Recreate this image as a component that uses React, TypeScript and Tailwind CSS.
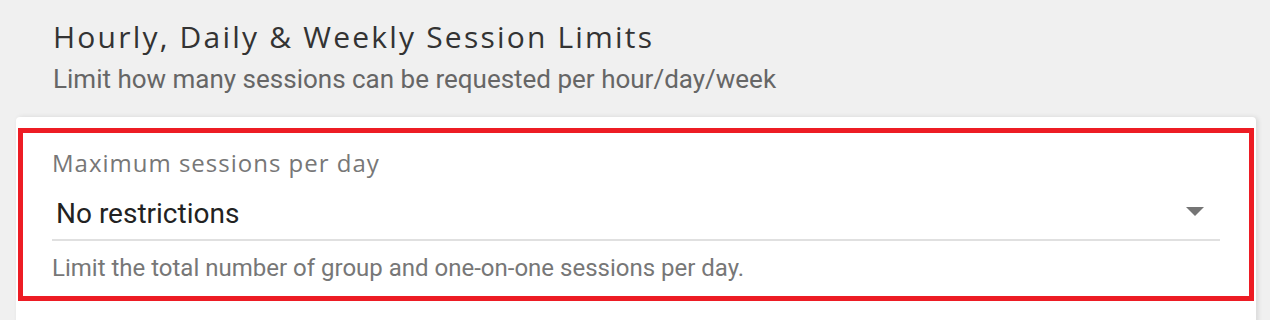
export default function App() {
  return (
    <div className="h-[320px] w-[1270px] overflow-hidden bg-[#f0f0f0] px-4">
      <div className="pl-[37px] pt-[19px]">
        <h2 className="text-[30px] leading-[36px] tracking-[2.2px] text-[#333333] font-['Open_Sans',sans-serif]">
          Hourly, Daily &amp; Weekly Session Limits
        </h2>
        <p className="mt-[8px] text-[26px] leading-[32px] text-[#666666] font-['Roboto',sans-serif]">
          Limit how many sessions can be requested per hour/day/week
        </p>
      </div>
      <div className="mt-[22px] h-[220px] w-[1240px] rounded-[4px] bg-white pt-[11px] pl-[2px] shadow-[2px_0_5px_rgba(0,0,0,0.1)]">
        <div className="w-[1236px] border-[5px] border-[#ed1c24] pl-[29px] pr-[29px] pt-[15px] pb-[13px]">
          <label className="block text-[24px] leading-[30px] tracking-[1px] text-[#777777] font-['Open_Sans',sans-serif]">
            Maximum sessions per day
          </label>
          <div className="mt-[19px] flex items-start justify-between border-b-2 border-[#e0e0e0] pb-[8px] pl-[4px]">
            <span className="text-[28px] leading-[34px] text-[#222222] font-['Roboto',sans-serif]">
              No restrictions
            </span>
            <svg width="18" height="9" viewBox="0 0 18 9" className="mt-[10px] mr-[16px]">
              <path d="M0 0 L18 0 L9 9 Z" fill="#757575" />
            </svg>
          </div>
          <p className="mt-[12px] text-[24px] leading-[30px] text-[#777777] font-['Roboto',sans-serif]">
            Limit the total number of group and one-on-one sessions per day.
          </p>
        </div>
      </div>
    </div>
  );
}
